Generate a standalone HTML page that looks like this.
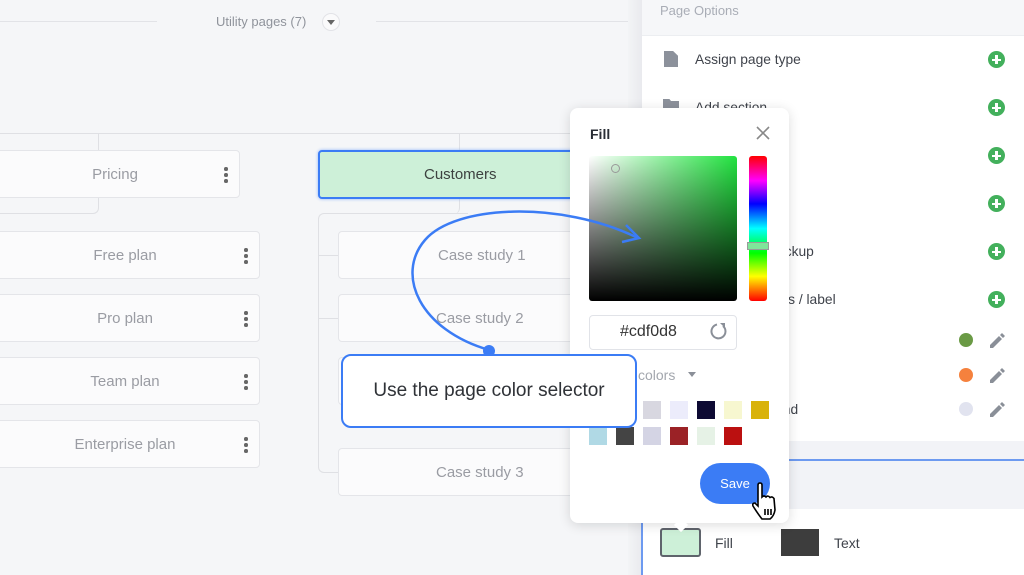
<!DOCTYPE html>
<html><head><style>
*{box-sizing:border-box;margin:0;padding:0}
body{width:1024px;height:575px;overflow:hidden;background:#f5f6f8;font-family:"Liberation Sans",sans-serif;position:relative}
.a{position:absolute}
.box{position:absolute;background:#fbfbfc;border:1px solid #e4e5e9;border-radius:4px;color:#9a9ca3;font-size:15px;display:flex;align-items:center;justify-content:center}
.dots{position:absolute;width:4px;height:16px;top:16px}
.dots i{display:block;width:3.5px;height:3.5px;border-radius:50%;background:#666;margin-bottom:2.5px}
.row{position:absolute;left:695px;font-size:13.8px;color:#3f434b}
.plus{position:absolute;left:988px;width:17px;height:17px;border-radius:50%;background:#43b05c}
.plus:before{content:"";position:absolute;left:4px;top:7.5px;width:9px;height:2.5px;background:#fff}
.plus:after{content:"";position:absolute;left:7.3px;top:4px;width:2.5px;height:9px;background:#fff}
.sw{position:absolute;width:18px;height:18px}
</style></head><body>
<div class="a" style="left:0;top:21px;width:157px;height:1px;background:#e2e3e7"></div>
<div class="a" style="left:376px;top:21px;width:260px;height:1px;background:#e2e3e7"></div>
<div class="a" style="left:216px;top:14px;font-size:13px;color:#8f939b">Utility pages (7)</div>
<div class="a" style="left:322px;top:13px;width:18px;height:18px;border-radius:50%;border:1px solid #e2e3e7;background:#fafafb"></div>
<div class="a" style="left:327px;top:20px;width:0;height:0;border-left:4px solid transparent;border-right:4px solid transparent;border-top:5px solid #666"></div>
<div class="a" style="left:0;top:133px;width:600px;height:1px;background:#dfe0e4"></div>
<div class="a" style="left:98px;top:133px;width:1px;height:18px;background:#dfe0e4"></div>
<div class="a" style="left:459px;top:133px;width:1px;height:18px;background:#dfe0e4"></div>
<div class="a" style="left:-10px;top:196px;width:109px;height:18px;border-right:1px solid #dfe0e4;border-bottom:1px solid #dfe0e4;border-bottom-right-radius:6px"></div>
<div class="a" style="left:318px;top:196px;width:142px;height:18px;border-right:1px solid #dfe0e4;border-bottom-right-radius:6px"></div>
<div class="a" style="left:318px;top:213px;width:150px;height:260px;border-left:1px solid #dfe0e4;border-top:1px solid #dfe0e4;border-bottom:1px solid #dfe0e4;border-radius:6px 0 0 6px"></div>
<div class="a" style="left:318px;top:255px;width:20px;height:1px;background:#dfe0e4"></div>
<div class="a" style="left:318px;top:318px;width:20px;height:1px;background:#dfe0e4"></div>
<div class="box" style="left:-10px;top:150px;width:250px;height:48px">Pricing<div class="dots" style="left:233px"><i></i><i></i><i></i></div></div>
<div class="box" style="left:-10px;top:231px;width:270px;height:48px">Free plan<div class="dots" style="left:253px"><i></i><i></i><i></i></div></div>
<div class="box" style="left:-10px;top:294px;width:270px;height:48px">Pro plan<div class="dots" style="left:253px"><i></i><i></i><i></i></div></div>
<div class="box" style="left:-10px;top:357px;width:270px;height:48px">Team plan<div class="dots" style="left:253px"><i></i><i></i><i></i></div></div>
<div class="box" style="left:-10px;top:420px;width:270px;height:48px">Enterprise plan<div class="dots" style="left:253px"><i></i><i></i><i></i></div></div>
<div class="box" style="left:318px;top:150px;width:288px;height:49px;background:#cdf0d8;border:2px solid #3b7cf5;color:#3d4240;box-shadow:0 0 3px #8fb4fb;justify-content:flex-start;padding-left:104px">Customers</div>
<div class="box" style="left:338px;top:231px;width:268px;height:48px;justify-content:flex-start;padding-left:99px">Case study 1</div>
<div class="box" style="left:338px;top:294px;width:268px;height:48px;justify-content:flex-start;padding-left:97px">Case study 2</div>
<div class="box" style="left:338px;top:357px;width:268px;height:48px"></div>
<div class="box" style="left:338px;top:448px;width:268px;height:48px;justify-content:flex-start;padding-left:97px">Case study 3</div>
<div class="a" style="left:628px;top:0;width:14px;height:575px;background:linear-gradient(90deg,#f3f4f6,#e9eaee)"></div>
<div class="a" style="left:642px;top:0;width:382px;height:575px;background:#fff"></div>
<div class="a" style="left:642px;top:0;width:382px;height:36px;background:#f6f7f9;border-bottom:1px solid #eceef1"></div>
<div class="a" style="left:660px;top:3px;font-size:13px;color:#a9adb6">Page Options</div>
<div class="a" style="left:664px;top:51px;width:14px;height:16px;background:#8c919b;clip-path:polygon(0 0,65% 0,100% 30%,100% 100%,0 100%)"></div>
<div class="a" style="left:663px;top:99px;width:16px;height:13px;background:#8c919b;clip-path:polygon(0 0,40% 0,50% 15%,100% 15%,100% 100%,0 100%)"></div>
<div class="row" style="top:52px">Assign page type</div>
<div class="row" style="top:100px">Add section</div>
<div class="row" style="top:244px;left:685px">Add sitemap mockup</div>
<div class="row" style="top:292px;left:706px">Add page tags / label</div>
<div class="row" style="top:402px;left:690px">Page background</div>
<div class="plus" style="top:51px"></div><div class="plus" style="top:99px"></div><div class="plus" style="top:147px"></div>
<div class="plus" style="top:195px"></div><div class="plus" style="top:243px"></div><div class="plus" style="top:291px"></div>
<div class="a" style="left:959px;top:333px;width:14px;height:14px;border-radius:50%;background:#6a9a45"></div>
<div class="a" style="left:959px;top:368px;width:14px;height:14px;border-radius:50%;background:#f5813d"></div>
<div class="a" style="left:959px;top:402px;width:14px;height:14px;border-radius:50%;background:#e1e3ef"></div>
<svg class="a" style="left:988px;top:331px" width="18" height="86" viewBox="0 0 18 86"><g fill="#8a8f98"><path d="M2 14 L2 17 L5 17 L14 8 L11 5Z M12 4 L14 2 L17 5 L15 7Z"/><path transform="translate(0,35)" d="M2 14 L2 17 L5 17 L14 8 L11 5Z M12 4 L14 2 L17 5 L15 7Z"/><path transform="translate(0,69)" d="M2 14 L2 17 L5 17 L14 8 L11 5Z M12 4 L14 2 L17 5 L15 7Z"/></g></svg>
<div class="a" style="left:642px;top:441px;width:382px;height:68px;background:#f2f3f7"></div>
<div class="a" style="left:642px;top:459px;width:382px;height:2px;background:#6d9af0"></div>
<div class="a" style="left:641px;top:459px;width:2px;height:116px;background:#6d9af0"></div>
<div class="a" style="left:660px;top:528px;width:41px;height:29px;background:#cdf0d8;border:2px solid #5f646c;border-radius:3px"></div>
<div class="a" style="left:715px;top:535px;font-size:14px;color:#3f434b">Fill</div>
<div class="a" style="left:781px;top:529px;width:38px;height:27px;background:#3d3d3d"></div>
<div class="a" style="left:834px;top:535px;font-size:14px;color:#3f434b">Text</div>
<div class="a" style="left:570px;top:108px;width:219px;height:415px;background:#fff;border-radius:8px;box-shadow:0 2px 12px rgba(0,0,0,.14)"></div>
<div class="a" style="left:676px;top:520px;width:10px;height:10px;background:#fff;transform:rotate(45deg)"></div>
<div class="a" style="left:590px;top:126px;font-size:14px;font-weight:bold;color:#2a2e35">Fill</div>
<svg class="a" style="left:756px;top:126px" width="14" height="14"><path d="M1 1L13 13M13 1L1 13" stroke="#888" stroke-width="1.6"/></svg>
<div class="a" style="left:589px;top:156px;width:148px;height:145px;border-radius:3px;background:linear-gradient(to top,#000,rgba(0,0,0,0)),linear-gradient(to right,#fff,#22e340)"></div>
<div class="a" style="left:611px;top:164px;width:9px;height:9px;border-radius:50%;border:1.5px solid #999"></div>
<div class="a" style="left:749px;top:156px;width:18px;height:145px;border-radius:3px;background:linear-gradient(#f00,#f0f 17%,#00f 33%,#0ff 50%,#0f0 67%,#ff0 83%,#f00)"></div>
<div class="a" style="left:747px;top:242px;width:22px;height:8px;border:1.5px solid #999;background:#7fe59a"></div>
<div class="a" style="left:589px;top:315px;width:148px;height:35px;border:1px solid #e1e3e8;border-radius:4px"></div>
<div class="a" style="left:620px;top:323px;font-size:16px;color:#333">#cdf0d8</div>
<svg class="a" style="left:710px;top:322px" width="18" height="18"><path d="M13 4 A7 7 0 1 1 7 2.5" fill="none" stroke="#8a8f98" stroke-width="2"/><path d="M10 1 L15 1 L15 6Z" fill="#8a8f98"/></svg>
<div class="a" style="left:638px;top:367px;font-size:14px;color:#a3a7ae">colors</div>
<div class="a" style="left:688px;top:372px;border-left:4px solid transparent;border-right:4px solid transparent;border-top:5px solid #8a8f98"></div>
<div class="sw" style="left:643px;top:401px;background:#d8d7e0"></div>
<div class="sw" style="left:670px;top:401px;background:#ececfb"></div>
<div class="sw" style="left:697px;top:401px;background:#0d0a33"></div>
<div class="sw" style="left:724px;top:401px;background:#f7f7d0"></div>
<div class="sw" style="left:751px;top:401px;background:#d9b20a"></div>
<div class="sw" style="left:589px;top:427px;background:#b0d9e5"></div>
<div class="sw" style="left:616px;top:427px;background:#444"></div>
<div class="sw" style="left:643px;top:427px;background:#d4d4e4"></div>
<div class="sw" style="left:670px;top:427px;background:#9b2226"></div>
<div class="sw" style="left:697px;top:427px;background:#e6f2e6"></div>
<div class="sw" style="left:724px;top:427px;background:#bb1010"></div>
<div class="a" style="left:700px;top:463px;width:70px;height:41px;border-radius:21px;background:#3b7cf5;color:#fff;font-size:13px;text-align:center;line-height:41px">Save</div>
<svg class="a" style="left:750px;top:482px" width="32" height="40" viewBox="0 0 32 40"><path d="M8 3 Q8 1 10 1 Q12 1 12 3 L12 15 Q14 13 16 15 Q18 13 20 15.5 Q22 14 24 16.5 L25 28 Q24 34 20 37 L12 37 Q8 32 3 24 Q2 21 5 21 L8 24Z" fill="#fff" stroke="#000" stroke-width="1.6"/><path d="M15 27v6M18 27v6M21 27v6" stroke="#000" stroke-width="1.6"/></svg>
<svg class="a" style="left:0;top:0" width="1024" height="575"><path d="M489 350 C420 330 395 275 425 240 C455 205 560 200 638 238" fill="none" stroke="#3b7cf5" stroke-width="2.5"/><path d="M626 225 L639 238 L622 242" fill="none" stroke="#3b7cf5" stroke-width="2.5"/><circle cx="489" cy="351" r="6" fill="#3b7cf5"/></svg>
<div class="a" style="left:341px;top:354px;width:296px;height:74px;background:#fff;border:2px solid #3b7cf5;border-radius:10px;font-size:19px;color:#2f3237;display:flex;align-items:center;justify-content:center">Use the page color selector</div>
</body></html>
